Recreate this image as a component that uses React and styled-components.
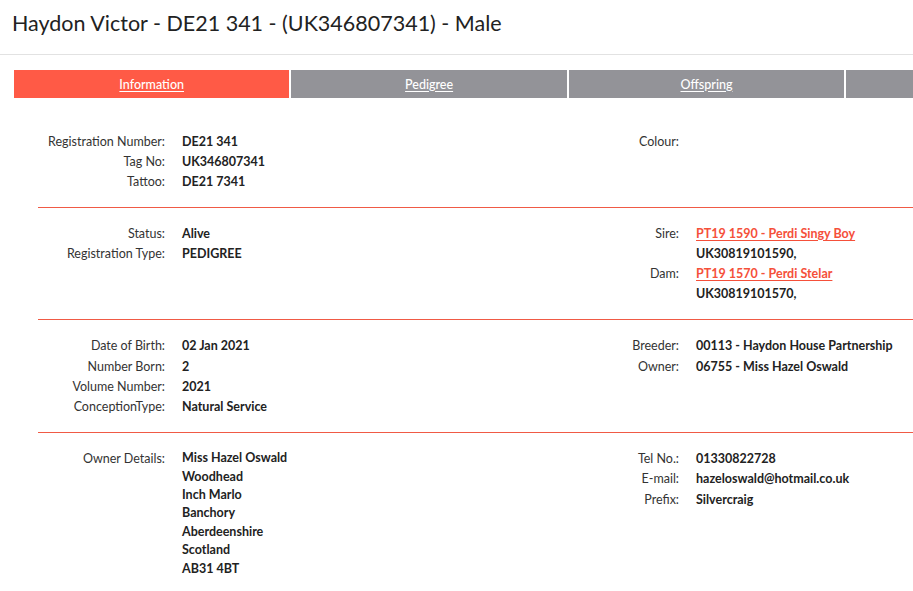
import styled, { createGlobalStyle } from "styled-components";

const GlobalStyle = createGlobalStyle`
  html, body {
    margin: 0;
    padding: 0;
    background: #fff;
    overflow: hidden;
  }
  body {
    font-family: Lato, "Noto Sans", Arial, sans-serif;
    color: #2b2b2b;
  }
`;

const tabs = ["Information", "Pedigree", "Offspring", ""];

const sections = [
  {
    left: [
      ["Registration Number:", "DE21 341"],
      ["Tag No:", "UK346807341"],
      ["Tattoo:", "DE21 7341"],
    ],
    right: [["Colour:", ""]],
  },
  {
    left: [
      ["Status:", "Alive"],
      ["Registration Type:", "PEDIGREE"],
    ],
    right: [
      ["Sire:", { href: "PT19 1590 - Perdi Singy Boy" }],
      ["", "UK30819101590,"],
      ["Dam:", { href: "PT19 1570 - Perdi Stelar" }],
      ["", "UK30819101570,"],
    ],
  },
  {
    left: [
      ["Date of Birth:", "02 Jan 2021"],
      ["Number Born:", "2"],
      ["Volume Number:", "2021"],
      ["ConceptionType:", "Natural Service"],
    ],
    right: [
      ["Breeder:", "00113 - Haydon House Partnership"],
      ["Owner:", "06755 - Miss Hazel Oswald"],
    ],
  },
  {
    left: [
      [
        "Owner Details:",
        [
          "Miss Hazel Oswald",
          "Woodhead",
          "Inch Marlo",
          "Banchory",
          "Aberdeenshire",
          "Scotland",
          "AB31 4BT",
        ],
      ],
    ],
    right: [
      ["Tel No.:", "01330822728"],
      ["E-mail:", "hazeloswald@hotmail.co.uk"],
      ["Prefix:", "Silvercraig"],
    ],
  },
];

const renderValue = (v) => {
  if (typeof v === "string") return v;
  if (Array.isArray(v))
    return (
      <Address>
        {v.map((l) => (
          <span key={l}>{l}</span>
        ))}
      </Address>
    );
  return <RedLink href="#">{v.href}</RedLink>;
};

const Column = ({ rows, labelWidth, width }) => (
  <Fields $labelWidth={labelWidth} $width={width}>
    {rows.map(([label, value], i) => (
      <Row key={i}>
        <Label>{label}</Label>
        <Value>{renderValue(value)}</Value>
      </Row>
    ))}
  </Fields>
);

const App = () => {
  return (
    <>
      <GlobalStyle />
      <Header>
        <Title>Haydon Victor - DE21 341 - (UK346807341) - Male</Title>
      </Header>
      <Page>
        <TabBar>
          {tabs.map((t, i) => (
            <Tab key={i} $active={i === 0}>
              {t && <a href="#">{t}</a>}
            </Tab>
          ))}
        </TabBar>
        <Details>
          {sections.map((s, i) => (
            <Section key={i} $first={i === 0}>
              <Column rows={s.left} labelWidth={127} width={490} />
              <Column rows={s.right} labelWidth={151} />
            </Section>
          ))}
        </Details>
      </Page>
    </>
  );
};

const Header = styled.div`
  height: 55px;
  border-bottom: 1px solid #e2e2e2;
  box-sizing: border-box;
  padding: 9px 12px 0;
  width: 1120px;
`;

const Title = styled.h1`
  margin: 0;
  font-size: 21.5px;
  font-weight: 400;
  line-height: 28px;
  color: #222;
`;

const Page = styled.div`
  width: 1120px;
  padding: 15px 0 0 14px;
`;

const TabBar = styled.div`
  display: grid;
  grid-template-columns: repeat(4, 275.4px);
  column-gap: 2px;
`;

const Tab = styled.div`
  height: 28px;
  display: flex;
  align-items: center;
  justify-content: center;
  background: ${(p) => (p.$active ? "#ff5a46" : "#939398")};
  a {
    color: #fff;
    font-size: 12.5px;
    font-weight: 500;
    text-decoration: underline;
    text-underline-offset: 2px;
  }
`;

const Details = styled.div`
  padding-left: 24px;
  padding-top: 18px;
`;

const Section = styled.div`
  display: flex;
  padding: 16px 0 ${(p) => (p.$first ? 14 : 15)}px;
  border-top: ${(p) => (p.$first ? "none" : "1px solid #f05a45")};
`;

const Fields = styled.div`
  display: grid;
  grid-template-columns: ${(p) => p.$labelWidth}px 1fr;
  column-gap: 17px;
  align-content: start;
  width: ${(p) => (p.$width ? `${p.$width}px` : "auto")};
  flex: ${(p) => (p.$width ? "none" : "1")};
`;

const Row = styled.div`
  display: contents;
`;

const Label = styled.div`
  text-align: right;
  font-size: 12.5px;
  line-height: 20.2px;
  color: #333;
`;

const Value = styled.div`
  font-size: 12.5px;
  line-height: 20.2px;
  font-weight: 700;
  color: #222;
  white-space: nowrap;
`;

const RedLink = styled.a`
  color: #f5503a;
  text-decoration: underline;
  text-underline-offset: 2px;
`;

const Address = styled.div`
  display: flex;
  flex-direction: column;
  line-height: 18.4px;
`;

export default App;
